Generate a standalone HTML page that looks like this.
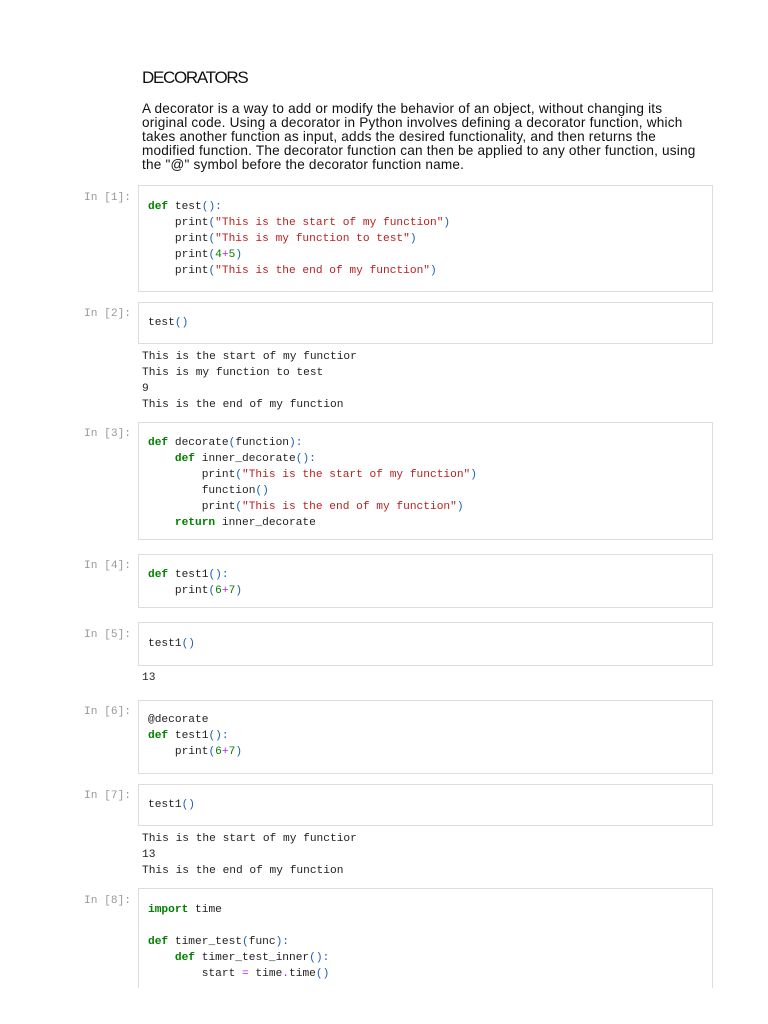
<!DOCTYPE html>
<html><head><meta charset="utf-8"><style>
body{margin:0;background:#fff;width:768px;height:1024px;overflow:hidden;position:relative;font-family:"Liberation Sans",sans-serif}
.t{position:absolute;left:142px;top:68px;font-size:17px;color:#111;letter-spacing:-1.3px}
.p{position:absolute;left:142px;top:102px;font-size:13.6px;line-height:14px;color:#111;letter-spacing:0.2px;white-space:nowrap}
.box{position:absolute;left:138px;width:573px;border:1px solid #ddd;background:#fff}
.lab{position:absolute;left:84px;font-family:"Liberation Mono",monospace;font-size:11.2px;color:#999}
.code{position:absolute;left:148px;font-family:"Liberation Mono",monospace;font-size:11.2px;line-height:16px;color:#222;white-space:pre;margin:0}
.k{color:#008000;font-weight:bold}.s{color:#ba2121}.b{color:#1a5fb4}.n{color:#008000}.o{color:#a2f}
</style></head><body>
<div class="t">DECORATORS</div>
<div class="p">A decorator is a way to add or modify the behavior of an object, without changing its<br>original code. Using a decorator in Python involves defining a decorator function, which<br>takes another function as input, adds the desired functionality, and then returns the<br>modified function. The decorator function can then be applied to any other function, using<br>the "@" symbol before the decorator function name.</div>

<div class="box" style="top:185px;height:105px"></div><div class="lab" style="top:192px">In [1]:</div>
<pre class="code" style="top:199px"><span class="k">def</span> test<span class="b">():</span>
    print<span class="b">(</span><span class="s">"This is the start of my function"</span><span class="b">)</span>
    print<span class="b">(</span><span class="s">"This is my function to test"</span><span class="b">)</span>
    print<span class="b">(</span><span class="n">4</span><span class="o">+</span><span class="n">5</span><span class="b">)</span>
    print<span class="b">(</span><span class="s">"This is the end of my function"</span><span class="b">)</span></pre>

<div class="box" style="top:302px;height:40px"></div><div class="lab" style="top:308px">In [2]:</div>
<pre class="code" style="top:315px">test<span class="b">()</span></pre>
<pre class="code" style="top:349px;left:142px">This is the start of my functior
This is my function to test
9
This is the end of my function</pre>

<div class="box" style="top:422px;height:116px"></div><div class="lab" style="top:428px">In [3]:</div>
<pre class="code" style="top:435px"><span class="k">def</span> decorate<span class="b">(</span>function<span class="b">):</span>
    <span class="k">def</span> inner_decorate<span class="b">():</span>
        print<span class="b">(</span><span class="s">"This is the start of my function"</span><span class="b">)</span>
        function<span class="b">()</span>
        print<span class="b">(</span><span class="s">"This is the end of my function"</span><span class="b">)</span>
    <span class="k">return</span> inner_decorate</pre>

<div class="box" style="top:554px;height:52px"></div><div class="lab" style="top:560px">In [4]:</div>
<pre class="code" style="top:567px"><span class="k">def</span> test1<span class="b">():</span>
    print<span class="b">(</span><span class="n">6</span><span class="o">+</span><span class="n">7</span><span class="b">)</span></pre>

<div class="box" style="top:622px;height:42px"></div><div class="lab" style="top:629px">In [5]:</div>
<pre class="code" style="top:636px">test1<span class="b">()</span></pre>
<pre class="code" style="top:670px;left:142px">13</pre>

<div class="box" style="top:700px;height:72px"></div><div class="lab" style="top:706px">In [6]:</div>
<pre class="code" style="top:712px">@decorate
<span class="k">def</span> test1<span class="b">():</span>
    print<span class="b">(</span><span class="n">6</span><span class="o">+</span><span class="n">7</span><span class="b">)</span></pre>

<div class="box" style="top:784px;height:40px"></div><div class="lab" style="top:790px">In [7]:</div>
<pre class="code" style="top:797px">test1<span class="b">()</span></pre>
<pre class="code" style="top:831px;left:142px">This is the start of my functior
13
This is the end of my function</pre>

<div class="box" style="top:888px;height:110px"></div><div class="lab" style="top:895px">In [8]:</div>
<pre class="code" style="top:902px"><span class="k">import</span> time

<span class="k">def</span> timer_test<span class="b">(</span>func<span class="b">):</span>
    <span class="k">def</span> timer_test_inner<span class="b">():</span>
        start <span class="o">=</span> time<span class="o">.</span>time<span class="b">()</span></pre>
<div style="position:absolute;left:0;top:988px;width:768px;height:36px;background:#fff"></div>
</body></html>
